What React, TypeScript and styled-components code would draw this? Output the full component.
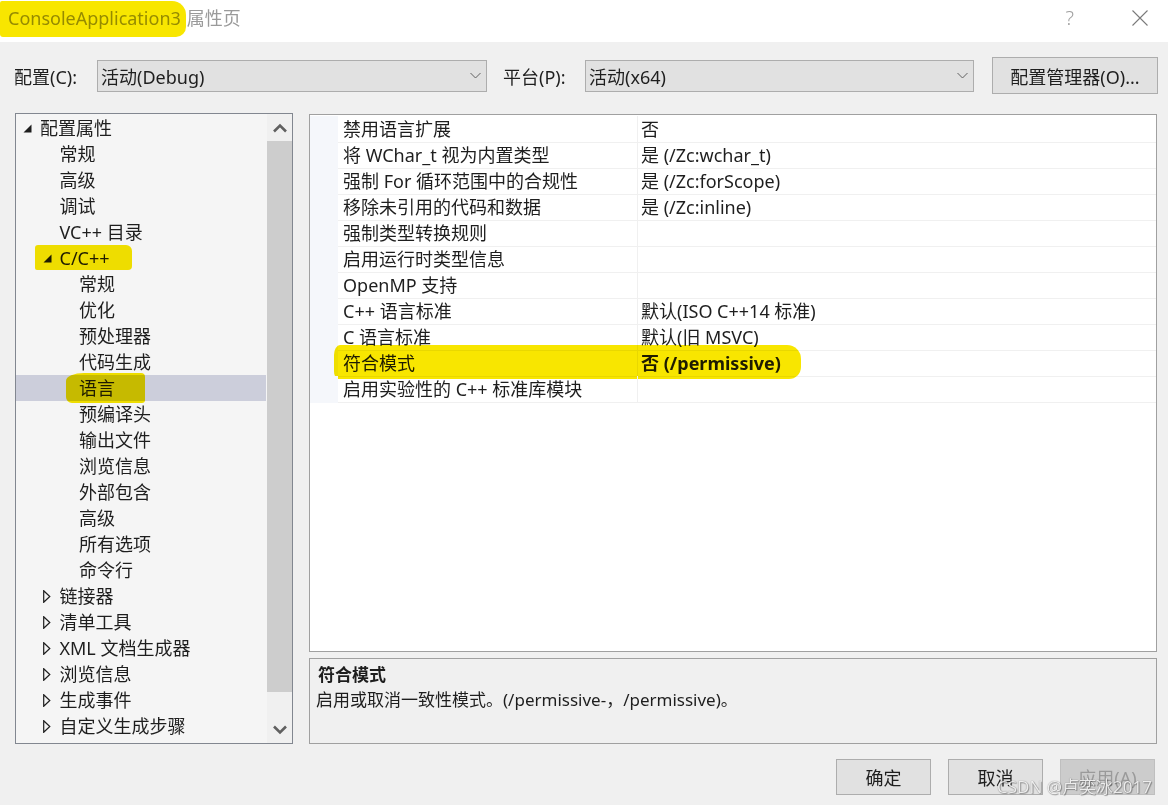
import React from "react";
import styled, { createGlobalStyle, css } from "styled-components";

const GlobalStyle = createGlobalStyle`
  html, body { margin: 0; padding: 0; }
  body {
    background: #f0f0f0;
    font-family: "Noto Sans", "Noto Sans CJK SC", sans-serif;
    color: #1e1e1e;
  }
`;

const Window = styled.div`
  position: relative;
  width: 1168px;
  height: 805px;
  display: flex;
  flex-direction: column;
  background: #f0f0f0;
  overflow: hidden;
`;

const TitleBar = styled.div`
  height: 42px;
  box-sizing: border-box;
  flex: none;
  background: #ffffff;
  display: flex;
  align-items: center;
  padding: 0 0 6px 8px;
  font-size: 18px;
  line-height: 22px;
  color: #9a9a9a;
`;

const TitleMark = styled.span`
  position: relative;
  margin-right: 6px;
  &::after {
    content: "";
    position: absolute;
    left: -8px;
    right: -5px;
    top: -6px;
    bottom: -8px;
    background: #f8e600;
    mix-blend-mode: multiply;
    border-radius: 2px 14px 10px 3px;
  }
`;

const TitleControls = styled.div`
  margin-left: auto;
  display: flex;
  align-items: center;
  gap: 58px;
  padding-right: 20px;
`;

const HelpGlyph = styled.span`
  font-size: 20px;
  color: #a0a0a0;
  font-weight: 300;
`;

const Toolbar = styled.div`
  display: flex;
  align-items: center;
  height: 37px;
  margin-top: 15px;
  padding-left: 14px;
  font-size: 18px;
`;

const Label = styled.span<{ $w: number }>`
  width: ${(p) => p.$w}px;
  flex: none;
  white-space: nowrap;
`;

const Select = styled.div<{ $w: number; $gap: number }>`
  width: ${(p) => p.$w}px;
  height: 32px;
  box-sizing: border-box;
  margin-right: ${(p) => p.$gap}px;
  flex: none;
  background: #e1e1e1;
  border: 1px solid #adadad;
  display: flex;
  align-items: center;
  padding: 0 5px 0 3px;
  font-size: 18px;
  & > span { flex: 1; }
`;

const buttonBase = css`
  box-sizing: border-box;
  background: #e1e1e1;
  border: 1px solid #adadad;
  display: flex;
  align-items: center;
  justify-content: center;
  font-size: 18px;
  font-family: inherit;
  color: #1e1e1e;
`;

const ManagerButton = styled.div`
  ${buttonBase};
  width: 166px;
  height: 37px;
`;

const Main = styled.div`
  display: flex;
  gap: 16px;
  height: 631px;
  margin-top: 19px;
  padding: 0 11px 0 15px;
  flex: none;
`;

const TreePanel = styled.div`
  width: 278px;
  box-sizing: border-box;
  border: 1px solid #828790;
  background: #f5f5f5;
  display: flex;
  flex: none;
`;

const TreeList = styled.div`
  flex: 1;
  padding-top: 1px;
  font-size: 18px;
`;

const TreeRow = styled.div<{ $level: number; $selected?: boolean }>`
  position: relative;
  height: 26px;
  line-height: 26px;
  display: flex;
  align-items: center;
  margin-right: 1px;
  padding-left: ${(p) => (p.$level - 1) * 19.5 + 6}px;
  background: ${(p) => (p.$selected ? "#cccedb" : "transparent")};
  white-space: nowrap;
`;

const Expander = styled.span`
  width: 18px;
  flex: none;
  display: flex;
  align-items: center;
  padding-left: 1px;
  box-sizing: border-box;
`;

const Scrollbar = styled.div`
  width: 25px;
  flex: none;
  background: #f0f0f0;
  display: flex;
  flex-direction: column;
`;

const ScrollButton = styled.div`
  height: 27px;
  flex: none;
  display: flex;
  align-items: center;
  justify-content: center;
`;

const ScrollTrack = styled.div`
  flex: 1;
  display: flex;
  flex-direction: column;
`;

const Thumb = styled.div`
  height: 551px;
  background: #cdcdcd;
`;

const RightColumn = styled.div`
  flex: 1;
  display: flex;
  flex-direction: column;
  gap: 6px;
  margin-top: 1px;
`;

const Grid = styled.div`
  height: 538px;
  box-sizing: border-box;
  border: 1px solid #a0a0a0;
  background: #ffffff;
  padding-top: 1px;
  font-size: 18px;
`;

const GridRow = styled.div`
  position: relative;
  display: grid;
  grid-template-columns: 28px 300px 1fr;
  height: 26px;
  line-height: 26px;
`;

const Gutter = styled.div`
  background: #f5f7fb;
`;

const NameCell = styled.div`
  padding-left: 5px;
  border-bottom: 1px solid #f0f0f0;
  border-right: 1px solid #f0f0f0;
  white-space: nowrap;
`;

const ValueCell = styled.div<{ $bold?: boolean }>`
  padding-left: 3px;
  border-bottom: 1px solid #f0f0f0;
  white-space: nowrap;
  font-weight: ${(p) => (p.$bold ? 700 : 400)};
`;

const Marker = styled.span<{
  $left: number;
  $top: number;
  $w: number;
  $h: number;
  $radius: string;
}>`
  position: absolute;
  left: ${(p) => p.$left}px;
  top: ${(p) => p.$top}px;
  width: ${(p) => p.$w}px;
  height: ${(p) => p.$h}px;
  background: #f8e600;
  mix-blend-mode: multiply;
  border-radius: ${(p) => p.$radius};
  pointer-events: none;
`;

const DescPanel = styled.div`
  flex: 1;
  box-sizing: border-box;
  border: 1px solid #a0a0a0;
  background: #f0f0f0;
  padding: 3px 8px 0 6px;
  font-size: 17px;
  line-height: 25px;
`;

const DescTitle = styled.div`
  font-weight: 700;
  padding-left: 2px;
`;

const Footer = styled.div`
  display: flex;
  justify-content: flex-end;
  gap: 17px;
  padding: 15px 13px 0 0;
`;

const DialogButton = styled.div<{ $disabled?: boolean }>`
  ${buttonBase};
  width: 95px;
  height: 36px;
  ${(p) =>
    p.$disabled &&
    css`
      background: #cccccc;
      border-color: #bfbfbf;
      color: #9a9a9a;
    `}
`;

const Watermark = styled.div`
  position: absolute;
  right: 16px;
  bottom: 7px;
  font-size: 17px;
  color: rgba(255, 255, 255, 0.88);
  text-shadow: 0 0 1px rgba(0, 0, 0, 0.55), 1px 1px 1px rgba(0, 0, 0, 0.3);
  pointer-events: none;
  white-space: nowrap;
`;

const Chevron = () => (
  <svg width="11" height="7" viewBox="0 0 11 7">
    <polyline points="0.5,1 5.5,6 10.5,1" fill="none" stroke="#606060" strokeWidth="1" />
  </svg>
);

const OpenArrow = () => (
  <svg width="9" height="9" viewBox="0 0 9 9">
    <polygon points="8.5,0.5 8.5,8.5 0.5,8.5" fill="#1e1e1e" />
  </svg>
);

const ClosedArrow = () => (
  <svg width="8" height="13" viewBox="0 0 8 13">
    <polygon points="0.7,0.7 6.8,6.5 0.7,12.3" fill="none" stroke="#1e1e1e" strokeWidth="1.2" />
  </svg>
);

const ScrollArrow = ({ up }: { up: boolean }) => (
  <svg width="14" height="10" viewBox="0 0 14 10">
    <polyline
      points={up ? "1,8.5 7,2.5 13,8.5" : "1,1.5 7,7.5 13,1.5"}
      fill="none"
      stroke="#606060"
      strokeWidth="2.6"
    />
  </svg>
);

const CloseIcon = () => (
  <svg width="16" height="16" viewBox="0 0 16 16">
    <path d="M0.5 0.5 L15.5 15.5 M15.5 0.5 L0.5 15.5" stroke="#7a7a7a" strokeWidth="1.1" />
  </svg>
);

type TreeItem = {
  label: string;
  level: number;
  exp?: "open" | "closed";
  selected?: boolean;
  mark?: { left: number; top: number; w: number; h: number; radius: string };
};

const treeItems: TreeItem[] = [
  { label: "配置属性", level: 1, exp: "open" },
  { label: "常规", level: 2 },
  { label: "高级", level: 2 },
  { label: "调试", level: 2 },
  { label: "VC++ 目录", level: 2 },
  {
    label: "C/C++",
    level: 2,
    exp: "open",
    mark: { left: 19, top: 0, w: 97, h: 25, radius: "3px 6px 4px 2px" },
  },
  { label: "常规", level: 3 },
  { label: "优化", level: 3 },
  { label: "预处理器", level: 3 },
  { label: "代码生成", level: 3 },
  {
    label: "语言",
    level: 3,
    selected: true,
    mark: { left: 50, top: -2, w: 79, h: 30, radius: "18px 4px 3px 6px / 8px 4px 3px 6px" },
  },
  { label: "预编译头", level: 3 },
  { label: "输出文件", level: 3 },
  { label: "浏览信息", level: 3 },
  { label: "外部包含", level: 3 },
  { label: "高级", level: 3 },
  { label: "所有选项", level: 3 },
  { label: "命令行", level: 3 },
  { label: "链接器", level: 2, exp: "closed" },
  { label: "清单工具", level: 2, exp: "closed" },
  { label: "XML 文档生成器", level: 2, exp: "closed" },
  { label: "浏览信息", level: 2, exp: "closed" },
  { label: "生成事件", level: 2, exp: "closed" },
  { label: "自定义生成步骤", level: 2, exp: "closed" },
];

type Prop = { name: string; value: string; bold?: boolean; marked?: boolean };

const props: Prop[] = [
  { name: "禁用语言扩展", value: "否" },
  { name: "将 WChar_t 视为内置类型", value: "是 (/Zc:wchar_t)" },
  { name: "强制 For 循环范围中的合规性", value: "是 (/Zc:forScope)" },
  { name: "移除未引用的代码和数据", value: "是 (/Zc:inline)" },
  { name: "强制类型转换规则", value: "" },
  { name: "启用运行时类型信息", value: "" },
  { name: "OpenMP 支持", value: "" },
  { name: "C++ 语言标准", value: "默认(ISO C++14 标准)" },
  { name: "C 语言标准", value: "默认(旧 MSVC)" },
  { name: "符合模式", value: "否 (/permissive)", bold: true, marked: true },
  { name: "启用实验性的 C++ 标准库模块", value: "" },
];

export default function App() {
  return (
    <>
      <GlobalStyle />
      <Window>
        <TitleBar>
          <TitleMark>ConsoleApplication3</TitleMark>
          属性页
          <TitleControls>
            <HelpGlyph>?</HelpGlyph>
            <CloseIcon />
          </TitleControls>
        </TitleBar>

        <Toolbar>
          <Label $w={83}>配置(C):</Label>
          <Select $w={390} $gap={16}>
            <span>活动(Debug)</span>
            <Chevron />
          </Select>
          <Label $w={82}>平台(P):</Label>
          <Select $w={389} $gap={18}>
            <span>活动(x64)</span>
            <Chevron />
          </Select>
          <ManagerButton>配置管理器(O)...</ManagerButton>
        </Toolbar>

        <Main>
          <TreePanel>
            <TreeList>
              {treeItems.map((it, i) => (
                <TreeRow key={i} $level={it.level} $selected={it.selected}>
                  <Expander>
                    {it.exp === "open" && <OpenArrow />}
                    {it.exp === "closed" && <ClosedArrow />}
                  </Expander>
                  {it.label}
                  {it.mark && (
                    <Marker
                      $left={it.mark.left}
                      $top={it.mark.top}
                      $w={it.mark.w}
                      $h={it.mark.h}
                      $radius={it.mark.radius}
                    />
                  )}
                </TreeRow>
              ))}
            </TreeList>
            <Scrollbar>
              <ScrollButton>
                <ScrollArrow up />
              </ScrollButton>
              <ScrollTrack>
                <Thumb />
              </ScrollTrack>
              <ScrollButton>
                <ScrollArrow up={false} />
              </ScrollButton>
            </Scrollbar>
          </TreePanel>

          <RightColumn>
            <Grid>
              {props.map((p, i) => (
                <GridRow key={i}>
                  <Gutter />
                  <NameCell>{p.name}</NameCell>
                  <ValueCell $bold={p.bold}>{p.value}</ValueCell>
                  {p.marked && (
                    <Marker
                      $left={24}
                      $top={-5}
                      $w={467}
                      $h={34}
                      $radius="6px 14px 12px 4px / 10px 14px 12px 8px"
                    />
                  )}
                </GridRow>
              ))}
            </Grid>
            <DescPanel>
              <DescTitle>符合模式</DescTitle>
              <div>启用或取消一致性模式。(/permissive-，/permissive)。</div>
            </DescPanel>
          </RightColumn>
        </Main>

        <Footer>
          <DialogButton>确定</DialogButton>
          <DialogButton>取消</DialogButton>
          <DialogButton $disabled>应用(A)</DialogButton>
        </Footer>

        <Watermark>CSDN @卢奕冰2017</Watermark>
      </Window>
    </>
  );
}
